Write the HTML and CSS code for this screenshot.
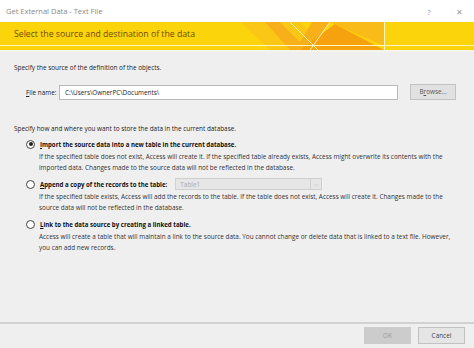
FILE: index.html
```html
<!DOCTYPE html>
<html lang="en">
<head>
  <meta charset="utf-8">
  <title>Get External Data - Text File</title>
  <link rel="stylesheet" href="styles.css">
</head>
<body>
  <div class="dialog">
    <div class="titlebar">
      <span class="title">Get External Data - Text File</span>
      <span class="ctrl help">?</span>
      <span class="ctrl close">&#x2715;</span>
    </div>

    <div class="banner">
      <svg class="deco" width="474" height="28" viewBox="0 0 474 28">
        <polygon points="240,0 300,0 330,28 270,28" fill="#fbc21a" opacity="0.7"/>
        <polygon points="265,0 280,0 300,20 312,0 330,0 310,28 290,28" fill="#f7b01a"/>
        <polygon points="300,28 335,2 384,28" fill="#f6a20f"/>
        <polygon points="330,0 384,0 384,24" fill="#f8b41c" opacity="0.8"/>
        <line x1="290" y1="0" x2="318" y2="28" stroke="#fff3b0" stroke-width="1"/>
        <line x1="310" y1="28" x2="330" y2="0" stroke="#fff3b0" stroke-width="1"/>
        <line x1="0" y1="23.5" x2="474" y2="23.5" stroke="#fff6c0" stroke-width="1"/>
        <line x1="384.5" y1="0" x2="384.5" y2="28" stroke="#fff6c0" stroke-width="1"/>
      </svg>
      <span class="banner-text">Select the source and destination of the data</span>
    </div>

    <div class="content">
      <p class="section">Specify the source of the definition of the objects.</p>
      <div class="file-row">
        <label class="file-label"><u>F</u>ile name:</label>
        <div class="input">C:\Users\OwnerPC\Documents\</div>
        <div class="btn browse">B<u>r</u>owse...</div>
      </div>

      <p class="section second">Specify how and where you want to store the data in the current database.</p>

      <div class="option first">
        <div class="opt-head">
          <span class="radio checked"></span>
          <span class="opt-title"><u>I</u>mport the source data into a new table in the current database.</span>
        </div>
        <p class="desc">If the specified table does not exist, Access will create it. If the specified table already exists, Access might overwrite its contents with the imported data. Changes made to the source data will not be reflected in the database.</p>
      </div>

      <div class="option">
        <div class="opt-head">
          <span class="radio"></span>
          <span class="opt-title"><u>A</u>ppend a copy of the records to the table:</span>
          <div class="combo"><span>Table1</span><span class="arrow">&#x2335;</span></div>
        </div>
        <p class="desc">If the specified table exists, Access will add the records to the table. If the table does not exist, Access will create it. Changes made to the source data will not be reflected in the database.</p>
      </div>

      <div class="option">
        <div class="opt-head">
          <span class="radio"></span>
          <span class="opt-title"><u>L</u>ink to the data source by creating a linked table.</span>
        </div>
        <p class="desc">Access will create a table that will maintain a link to the source data. You cannot change or delete data that is linked to a text file. However, you can add new records.</p>
      </div>
    </div>

    <div class="footer">
      <div class="btn ok">OK</div>
      <div class="btn">Cancel</div>
    </div>
  </div>
</body>
</html>
```

FILE: styles.css
```css
body{
  margin:0;
  font-family:"Open Sans","Noto Sans",sans-serif;
  background:#efefef;
  color:#222;
}

.dialog{
  width:474px;
  height:348px;
  display:flex;
  flex-direction:column;
  overflow:hidden;
}

.titlebar{
  height:22px;
  background:#fff;
  display:flex;
  align-items:center;
  padding-left:6px;
  font-size:7.5px;
  color:#888;
}

.title{
  flex:1;
}

.ctrl{
  width:30px;
  text-align:center;
  color:#999;
  font-size:8px;
}

.banner{
  position:relative;
  height:28px;
  background:#fcd40b;
  display:flex;
  align-items:center;
  padding-left:14px;
  padding-bottom:4px;
  box-sizing:border-box;
}

.deco{
  position:absolute;
  top:0;
  left:0;
}

.banner-text{
  position:relative;
  font-size:8.7px;
  color:#6e4c05;
}

.content{
  flex:1;
  padding:2px 12px 0 14px;
  border-top:2px solid #f6f3ea;
  font-size:6.4px;
}

.content p{
  margin:0;
}

.section{
  margin-top:8px !important;
  height:12px;
  line-height:12px;
}

.section.second{
  margin-top:23px !important;
}

.file-row{
  display:flex;
  align-items:center;
  margin-top:10px;
  padding-left:12px;
}

.file-label{
  width:33px;
}

.input{
  width:332px;
  height:13px;
  line-height:13px;
  background:#fff;
  border:1px solid #b9b9b9;
  padding-left:5px;
  margin-right:12px;
}

.btn{
  width:44px;
  height:14px;
  line-height:14px;
  text-align:center;
  background:#e1e1e1;
  border:1px solid #c2c2c2;
  color:#555;
  font-size:6.4px;
}

.option{
  padding-left:12px;
  margin-top:4px;
}

.option.first{
  margin-top:2px;
}

.opt-head{
  display:flex;
  align-items:center;
  height:14px;
}

.radio{
  width:7px;
  height:7px;
  border:1px solid #444;
  border-radius:50%;
  background:#fff;
  margin-right:5px;
  display:flex;
  align-items:center;
  justify-content:center;
}

.radio.checked::after{
  content:"";
  width:4px;
  height:4px;
  border-radius:50%;
  background:#222;
}

.opt-title{
  font-weight:bold;
  font-size:6.1px;
  color:#111;
}

.combo{
  margin-left:8px;
  width:147px;
  height:12px;
  border:1px solid #cfcfcf;
  background:#e6e6e6;
  color:#aaa;
  display:flex;
  align-items:center;
  justify-content:space-between;
  padding-left:4px;
  box-sizing:border-box;
}

.arrow{
  width:10px;
  height:100%;
  border-left:1px solid #cfcfcf;
  text-align:center;
  line-height:10px;
  font-size:6px;
  color:#aaa;
}

.desc{
  padding-left:13px;
  line-height:10.5px;
  color:#333;
  margin-top:1px !important;
}

.footer{
  height:22px;
  border-top:2px solid #d2d2d2;
  display:flex;
  justify-content:flex-end;
  align-items:center;
  gap:7px;
  padding-right:9px;
  padding-bottom:2px;
}

.footer .btn{
  width:45px;
  height:15px;
  line-height:15px;
  background:#e5e5e5;
  color:#444;
}

.footer .ok{
  background:#cccccc;
  color:#9a9a9a;
  border-color:#cccccc;
}
```
